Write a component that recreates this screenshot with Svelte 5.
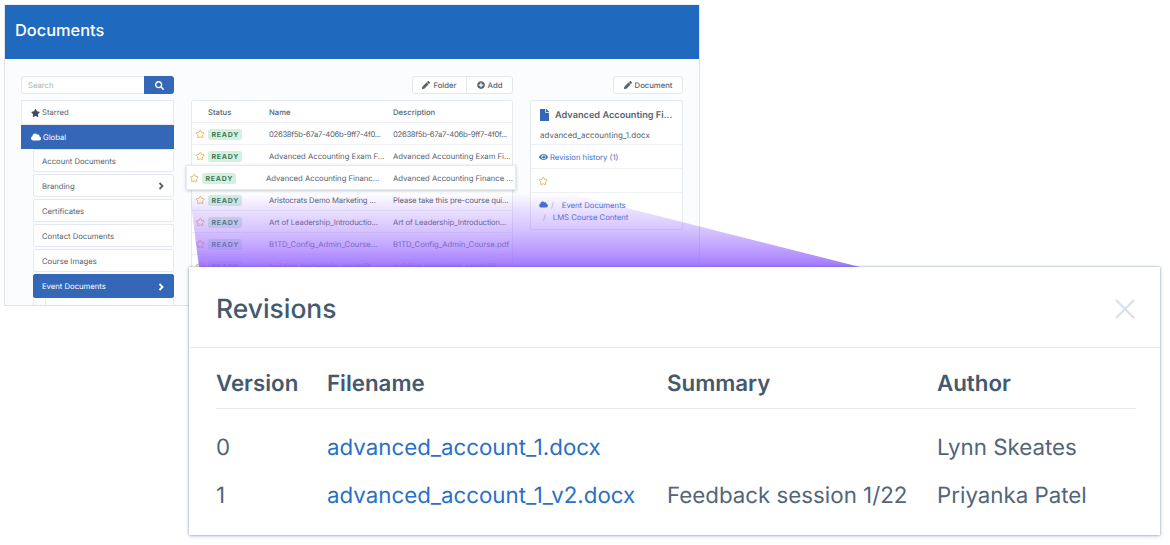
<script>
    const icons = {
        star: ['0 0 576 512', 'M259.3 17.8L194 150.2 47.9 171.5c-26.2 3.8-36.7 36.1-17.7 54.6l105.7 103-25 145.5c-4.5 26.3 23.2 46 46.4 33.7L288 439.6l130.7 68.7c23.2 12.2 50.9-7.4 46.4-33.7l-25-145.5 105.7-103c19-18.5 8.5-50.8-17.7-54.6L382 150.2 316.7 17.8c-11.7-23.6-45.6-23.9-57.4 0z'],
        pencil: ['0 0 512 512', 'M497.9 142.1l-46.1 46.1c-4.7 4.7-12.3 4.7-17 0l-111-111c-4.7-4.7-4.7-12.3 0-17l46.1-46.1c18.7-18.7 49.1-18.7 67.9 0l60.1 60.1c18.8 18.7 18.8 49.1 0 67.9zM284.2 99.8L21.6 362.4.4 483.9c-2.9 16.4 11.4 30.6 27.8 27.8l121.5-21.3 262.6-262.6c4.7-4.7 4.7-12.3 0-17l-111-111c-4.8-4.7-12.4-4.7-17.1 0z'],
        plus: ['0 0 512 512', 'M256 8C119 8 8 119 8 256s111 248 248 248 248-111 248-248S393 8 256 8zm144 276c0 6.6-5.4 12-12 12h-92v92c0 6.6-5.4 12-12 12h-56c-6.6 0-12-5.4-12-12v-92h-92c-6.6 0-12-5.4-12-12v-56c0-6.6 5.4-12 12-12h92v-92c0-6.6 5.4-12 12-12h56c6.6 0 12 5.4 12 12v92h92c6.6 0 12 5.4 12 12v56z'],
        search: ['0 0 512 512', 'M505 442.7L405.3 343c-4.5-4.5-10.6-7-17-7H372c27.6-35.3 44-79.7 44-128C416 93.1 322.9 0 208 0S0 93.1 0 208s93.1 208 208 208c48.3 0 92.7-16.4 128-44v16.3c0 6.4 2.5 12.5 7 17l99.7 99.7c9.4 9.4 24.6 9.4 33.9 0l28.3-28.3c9.4-9.4 9.4-24.6.1-34zM208 336c-70.7 0-128-57.2-128-128 0-70.7 57.2-128 128-128 70.7 0 128 57.2 128 128 0 70.7-57.2 128-128 128z'],
        cloud: ['0 0 640 512', 'M537.6 226.6c4.1-10.7 6.4-22.4 6.4-34.6 0-53-43-96-96-96-19.7 0-38.1 6-53.3 16.2C367 64.2 315.3 32 256 32c-88.4 0-160 71.6-160 160 0 2.7.1 5.4.2 8.1C40.2 219.8 0 273.2 0 336c0 79.5 64.5 144 144 144h368c70.7 0 128-57.3 128-128 0-61.9-44-113.6-102.4-125.4z'],
        file: ['0 0 384 512', 'M224 136V0H24C10.7 0 0 10.7 0 24v464c0 13.3 10.7 24 24 24h336c13.3 0 24-10.7 24-24V160H248c-13.2 0-24-10.8-24-24zm160-14.1v6.1H256V0h6.1c6.4 0 12.5 2.5 17 7l97.9 98c4.5 4.5 7 10.6 7 16.9z'],
        eye: ['0 0 576 512', 'M572.52 241.4C518.29 135.59 410.93 64 288 64S57.68 135.64 3.48 241.41a32.35 32.35 0 0 0 0 29.19C57.71 376.41 165.07 448 288 448s230.32-71.64 284.52-177.41a32.35 32.35 0 0 0 0-29.19zM288 400a144 144 0 1 1 144-144 143.93 143.93 0 0 1-144 144zm0-240a95.31 95.31 0 0 0-25.31 3.79 47.85 47.85 0 0 1-66.9 66.9A95.78 95.78 0 1 0 288 160z']
    };

    const folders = [
        { name: 'Account Documents' },
        { name: 'Branding', more: true },
        { name: 'Certificates' },
        { name: 'Contact Documents' },
        { name: 'Course Images' },
        { name: 'Event Documents', more: true, active: true }
    ];

    const docs = [
        { name: '02638f5b-67a7-406b-9ff7-4f0...', desc: '02638f5b-67a7-406b-9ff7-4f0f...', fit: 'tight' },
        { name: 'Advanced Accounting Exam F...', desc: 'Advanced Accounting Exam Fi...' },
        { name: 'Advanced Accounting Financ...', desc: 'Advanced Accounting Finance ...', lifted: true },
        { name: 'Aristocrats Demo Marketing ...', desc: 'Please take this pre-course qui...', fit: 'snug' },
        { name: 'Art of Leadership_Introductio...', desc: 'Art of Leadership_Introduction...', fit: 'snug' },
        { name: 'B1TD_Config_Admin_Course...', desc: 'B1TD_Config_Admin_Course.pdf' },
        { name: 'building_leadership_capabilit...', desc: 'building_leadership_capabiliti...', fit: 'snug' }
    ];

    const revisions = [
        { version: '0', file: 'advanced_account_1.docx', summary: '', author: 'Lynn Skeates' },
        { version: '1', file: 'advanced_account_1_v2.docx', summary: 'Feedback session 1/22', author: 'Priyanka Patel' }
    ];
</script>

{#snippet icon(name, cls)}
    <svg class={cls} viewBox={icons[name][0]} aria-hidden="true"><path d={icons[name][1]} /></svg>
{/snippet}

<div class="stage">
    <section class="window">
        <header class="topbar"><h1>Documents</h1></header>
        <div class="content">
            <aside class="sidebar">
                <div class="search">
                    <span class="search-input">Search</span>
                    <span class="search-btn">{@render icon('search', 'ico-search')}</span>
                </div>
                <div class="root">{@render icon('star', 'ico-solid')} Starred</div>
                <div class="root root-active">{@render icon('cloud', 'ico-cloud')} Global</div>
                <div class="tree">
                    {#each folders as f}
                        <div class="folder" class:active={f.active}>
                            <span>{f.name}</span>
                            {#if f.more}
                                <svg class="chev" viewBox="0 0 6 8"><path d="M1.5 1l3 3-3 3" /></svg>
                            {/if}
                        </div>
                    {/each}
                    <div class="tree-end"><div class="tree-child"></div></div>
                </div>
            </aside>

            <main class="middle">
                <div class="toolbar">
                    <div class="btn-group">
                        <span class="btn">{@render icon('pencil', 'ico-btn')} Folder</span>
                        <span class="btn">{@render icon('plus', 'ico-btn')} Add</span>
                    </div>
                </div>
                <div class="doc-table">
                    <div class="row head">
                        <span></span><span>Status</span><span>Name</span><span>Description</span>
                    </div>
                    {#each docs as d}
                        <div class="row" class:lifted={d.lifted} class:tight={d.fit === 'tight'} class:snug={d.fit === 'snug'}>
                            {@render icon('star', 'ico-star')}
                            <span class="badge">READY</span>
                            <span>{d.name}</span>
                            <span>{d.desc}</span>
                        </div>
                    {/each}
                </div>
            </main>

            <aside class="details">
                <div class="toolbar">
                    <span class="btn btn-single">{@render icon('pencil', 'ico-btn')} Document</span>
                </div>
                <div class="card">
                    <div class="card-block">
                        <div class="doc-title">{@render icon('file', 'ico-file')}<span>Advanced Accounting Fi...</span></div>
                        <div class="doc-file">advanced_accounting_1.docx</div>
                    </div>
                    <div class="card-line link">{@render icon('eye', 'ico-eye')} Revision history (1)</div>
                    <div class="card-line">{@render icon('star', 'ico-star')}</div>
                    <div class="card-crumbs link">
                        <div>{@render icon('cloud', 'ico-crumb')}<i>/</i><span>Event Documents</span></div>
                        <div class="crumb-row"><i>/</i><span>LMS Course Content</span></div>
                    </div>
                </div>
            </aside>
        </div>
    </section>

    <svg class="beam" viewBox="0 0 672 87" aria-hidden="true">
        <defs>
            <linearGradient id="beam-fill" x1="0" y1="0" x2="0" y2="1">
                <stop offset="0" stop-color="#9a6cff" stop-opacity="0" />
                <stop offset="0.15" stop-color="#9a6cff" stop-opacity="0" />
                <stop offset="0.34" stop-color="#9a6cff" stop-opacity="0.2" />
                <stop offset="0.57" stop-color="#9a6cff" stop-opacity="0.4" />
                <stop offset="0.8" stop-color="#9a6cff" stop-opacity="0.65" />
                <stop offset="1" stop-color="#9a6cff" stop-opacity="0.92" />
            </linearGradient>
        </defs>
        <polygon points="0,0 328,0 672,87 11,87" fill="url(#beam-fill)" />
    </svg>

    <section class="modal">
        <div class="modal-head">
            <h2>Revisions</h2>
            <svg class="close" viewBox="0 0 20 20"><path d="M1 1l18 18M19 1L1 19" /></svg>
        </div>
        <div class="modal-body">
            <div class="rev-row rev-head">
                <span>Version</span><span>Filename</span><span>Summary</span><span>Author</span>
            </div>
            {#each revisions as r}
                <div class="rev-row">
                    <span>{r.version}</span>
                    <span class="rev-link">{r.file}</span>
                    <span>{r.summary}</span>
                    <span>{r.author}</span>
                </div>
            {/each}
        </div>
    </section>
</div>

<style>
    :global(body) {
        margin: 0;
        background: #fff;
    }

    .stage {
        position: relative;
        width: 1170px;
        height: 545px;
        overflow: hidden;
        font-family: Inter, "Liberation Sans", sans-serif;
        text-rendering: geometricPrecision;
        color: #56636f;
    }

    svg {
        display: inline-block;
        fill: currentColor;
    }

    /* background window */
    .window {
        position: absolute;
        left: 4px;
        top: 4px;
        width: 696px;
        height: 302px;
        box-sizing: border-box;
        border: 1px solid #dfe4ec;
        border-top-color: #eef1f6;
        background: #fbfcfe;
        overflow: hidden;
    }

    .topbar {
        background: #1f69bf;
        height: 54px;
        box-sizing: border-box;
        display: flex;
        align-items: center;
        padding: 0 0 4px 10px;
    }

    .topbar h1 {
        margin: 0;
        font-size: 16.4px;
        font-weight: 500;
        color: #fff;
    }

    .content {
        display: flex;
        padding: 17px 16px 0;
        font-size: 7.7px;
        align-items: flex-start;
    }

    .sidebar {
        width: 153px;
        flex: none;
    }

    .search {
        display: flex;
        height: 18px;
        margin-bottom: 6px;
    }

    .search-input {
        flex: 1;
        box-sizing: border-box;
        border: 1px solid #e4e8ee;
        border-right: 0;
        border-radius: 3px 0 0 3px;
        background: #fff;
        color: #a9b1ba;
        padding-left: 6px;
        line-height: 17px;
    }

    .search-btn {
        width: 30px;
        background: #3567b9;
        border-radius: 0 3px 3px 0;
        color: #fff;
        display: flex;
        align-items: center;
        justify-content: center;
    }

    .ico-search {
        width: 9px;
        height: 9px;
    }

    .root {
        height: 24.5px;
        box-sizing: border-box;
        border: 1px solid #e6e9ef;
        background: #fff;
        display: flex;
        align-items: center;
        gap: 2px;
        padding: 1px 0 0 9px;
    }

    .root-active {
        background: #3567b9;
        border-color: #3567b9;
        color: #fff;
    }

    .ico-solid {
        width: 9px;
        height: 8px;
        color: #3e4c5c;
    }

    .ico-cloud {
        width: 10px;
        height: 8px;
    }

    .tree {
        margin-left: 12px;
        display: flex;
        flex-direction: column;
    }

    .folder {
        height: 23px;
        margin-bottom: 2px;
        box-sizing: border-box;
        border: 1px solid #e6e9ef;
        border-radius: 2px;
        background: #fff;
        display: flex;
        align-items: center;
        justify-content: space-between;
        padding: 1px 9px 0 8px;
    }

    .folder.active {
        background: #3567b9;
        border-color: #3567b9;
        color: #fff;
        height: 24px;
        margin-bottom: 1px;
    }

    .chev {
        width: 6px;
        height: 8px;
        fill: none;
        stroke: currentColor;
        stroke-width: 1.8;
    }

    .tree-end {
        height: 12px;
        border-left: 1px solid #e6e9ef;
        padding-left: 11px;
    }

    .tree-child {
        height: 12px;
        background: #fff;
        border-left: 1px solid #e6e9ef;
        border-right: 1px solid #e6e9ef;
    }

    .middle {
        width: 322px;
        flex: none;
        margin-left: 17px;
    }

    .toolbar {
        height: 18px;
        margin-bottom: 6px;
        display: flex;
        justify-content: flex-end;
    }

    .btn-group {
        display: flex;
        border: 1px solid #e4e8ee;
        border-radius: 3px;
        background: #fff;
    }

    .btn {
        display: flex;
        align-items: center;
        justify-content: center;
        gap: 3px;
        font-weight: 500;
    }

    .btn-group .btn {
        width: 53px;
    }

    .btn-group .btn + .btn {
        border-left: 1px solid #e4e8ee;
        width: 45px;
    }

    .btn-single {
        width: 70px;
        box-sizing: border-box;
        border: 1px solid #e4e8ee;
        border-radius: 3px;
        background: #fff;
    }

    .ico-btn {
        width: 8px;
        height: 8px;
    }

    .doc-table {
        border: 1px solid #e6e9ef;
        border-radius: 2px;
        background: #fff;
    }

    .row {
        display: grid;
        grid-template-columns: 16px 61px 124px 1fr;
        align-items: center;
        height: 22px;
        padding-top: 1px;
        border-bottom: 1px solid #eef0f4;
        box-sizing: border-box;
        white-space: nowrap;
        overflow: hidden;
    }

    .row.head {
        font-weight: 500;
    }

    .row.tight {
        letter-spacing: -0.3px;
    }

    .row.snug {
        letter-spacing: -0.12px;
    }

    .row.lifted {
        position: relative;
        margin: -2px -4px -1px -6px;
        height: 25px;
        grid-template-columns: 15px 64px 127px 1fr;
        background: #fff;
        border: 1px solid #e6e9ef;
        box-shadow: 0 1px 3px rgba(60, 80, 110, 0.3);
    }

    .ico-star {
        justify-self: center;
        width: 8.5px;
        height: 8px;
        fill: none;
        stroke: #d9a441;
        stroke-width: 52;
        overflow: visible;
    }

    .badge {
        justify-self: start;
        background: #d3f1de;
        color: #3d7a58;
        font-weight: 700;
        font-size: 7px;
        letter-spacing: 0.7px;
        line-height: 11px;
        padding: 0 3px 0 3.5px;
        border-radius: 2.5px;
    }

    .details {
        width: 153px;
        flex: none;
        margin-left: 17px;
    }

    .card {
        border: 1px solid #e6e9ef;
        border-radius: 2px;
        background: #fff;
    }

    .card-block {
        padding: 7px 9px 4px 8px;
        border-bottom: 1px solid #eef0f4;
    }

    .doc-title {
        display: flex;
        align-items: center;
        gap: 6px;
        font-size: 9.2px;
        font-weight: 600;
        height: 14px;
        white-space: nowrap;
    }

    .ico-file {
        width: 9px;
        height: 12px;
        margin-left: 1px;
        color: #3567b9;
        flex: none;
    }

    .doc-file {
        margin: 8px 0 0 1px;
        font-size: 8px;
        line-height: 10px;
        white-space: nowrap;
    }

    .card-line {
        height: 24px;
        box-sizing: border-box;
        border-bottom: 1px solid #eef0f4;
        display: flex;
        align-items: center;
        padding: 1px 0 0 8px;
        gap: 2px;
    }

    .link {
        color: #3a70c8;
    }

    .ico-eye {
        width: 9px;
        height: 8px;
    }

    .card-crumbs {
        padding: 7px 8px 5px;
        line-height: 12px;
        white-space: nowrap;
    }

    .card-crumbs i {
        color: #a9b1ba;
        font-style: normal;
        margin: 0 8px 0 3px;
    }

    .ico-crumb {
        width: 9px;
        height: 7px;
    }

    .crumb-row {
        padding-left: 4px;
    }

    .crumb-row i {
        margin: 0 7px 0 0;
    }

    /* purple beam between window and modal */
    .beam {
        position: absolute;
        left: 188px;
        top: 180px;
        width: 672px;
        height: 87px;
    }

    /* modal */
    .modal {
        position: absolute;
        left: 189px;
        top: 267px;
        width: 971px;
        height: 268px;
        background: #fff;
        box-shadow: 0 0 2px rgba(70, 100, 140, 0.55), 0 1px 4px rgba(70, 100, 140, 0.3);
        color: #52657a;
    }

    .modal-head {
        height: 81px;
        box-sizing: border-box;
        border-bottom: 1px solid #e6ebf1;
        display: flex;
        align-items: center;
        justify-content: space-between;
        padding: 3px 25px 0 27px;
    }

    .modal-head h2 {
        margin: 0;
        font-size: 26.4px;
        font-weight: 500;
        color: #44596e;
    }

    .close {
        width: 20px;
        height: 20px;
        fill: none;
        stroke: #d6e0ea;
        stroke-width: 2;
    }

    .modal-body {
        padding: 0 24px 0 27px;
    }

    .rev-row {
        display: grid;
        grid-template-columns: 111px 340px 270px 1fr;
        align-items: center;
        height: 48.5px;
        font-size: 22.3px;
        white-space: nowrap;
    }

    .rev-head {
        height: 61px;
        padding-top: 10px;
        box-sizing: border-box;
        font-weight: 600;
        color: #44596e;
        border-bottom: 1px solid #e6ebf1;
        margin-bottom: 14px;
    }

    .rev-link {
        color: #2a70c4;
    }
</style>
